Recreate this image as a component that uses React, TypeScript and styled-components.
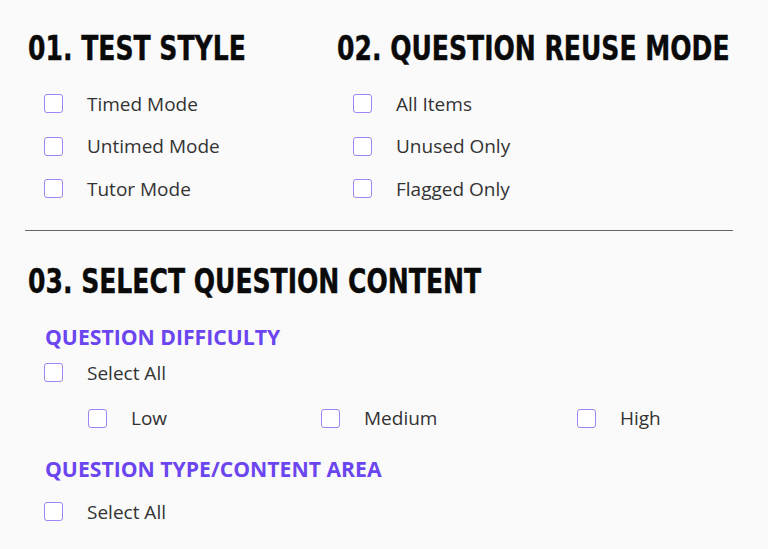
import React from "react";
import styled, { createGlobalStyle } from "styled-components";

const Global = createGlobalStyle`
  html, body { margin: 0; padding: 0; background: #fafafa; overflow-x: hidden; }
  body { font-family: "Open Sans", "Noto Sans", sans-serif; color: #333; }
`;

const Page = styled.div`
  padding: 26px 35px 20px 25px;
  display: flex;
  flex-direction: column;
  overflow: hidden;
`;

const TopGrid = styled.div`
  display: grid;
  grid-template-columns: 309px 1fr;
  padding-bottom: 19.5px;
`;

const Column = styled.div`
  display: flex;
  flex-direction: column;
  min-width: 0;
`;

const Heading = styled.h2`
  margin: 0 0 0 3px;
  font-family: "DejaVu Sans Condensed", "DejaVu Sans", sans-serif;
  font-weight: 700;
  font-size: 34px;
  line-height: 44px;
  color: #0a0a0a;
  white-space: nowrap;
  -webkit-text-stroke: 0.4px #0a0a0a;
  transform: scaleX(0.82);
  transform-origin: left center;
`;

const List = styled.div`
  display: flex;
  flex-direction: column;
  margin-top: 12.5px;
  padding-left: 19px;
`;

const Row = styled.label`
  display: flex;
  align-items: center;
  height: 42.5px;
  font-size: 19px;
  color: #333;
  cursor: pointer;
`;

const Box = styled.span`
  width: 19px;
  height: 19px;
  box-sizing: border-box;
  border: 1.6px solid #a084f3;
  border-radius: 3px;
  flex: none;
  margin-right: 24px;
  background: #fff;
`;

const Divider = styled.hr`
  margin: 0;
  border: none;
  border-top: 1.5px solid #666;
  width: 708px;
`;

const Section = styled.div`
  display: flex;
  flex-direction: column;
  padding-top: 28px;
`;

const SubHeading = styled.h3<{ $top: number }>`
  margin: ${(p) => p.$top}px 0 0 20px;
  font-family: "Open Sans", "Noto Sans", sans-serif;
  font-weight: 700;
  font-size: 21.2px;
  line-height: 24px;
  color: #6b45ef;
`;

const SubList = styled.div<{ $top: number }>`
  display: flex;
  flex-direction: column;
  padding-left: 19px;
  margin-top: ${(p) => p.$top}px;
`;

const TriGrid = styled.div`
  display: grid;
  grid-template-columns: 233px 256px 1fr;
  padding-left: 63px;
  margin-top: 3px;
`;

const Check = ({ label }: { label: string }) => (
  <Row>
    <Box />
    <span>{label}</span>
  </Row>
);

export default function App() {
  return (
    <>
      <Global />
      <Page>
        <TopGrid>
          <Column>
            <Heading>01. TEST STYLE</Heading>
            <List>
              <Check label="Timed Mode" />
              <Check label="Untimed Mode" />
              <Check label="Tutor Mode" />
            </List>
          </Column>
          <Column>
            <Heading>02. QUESTION REUSE MODE</Heading>
            <List>
              <Check label="All Items" />
              <Check label="Unused Only" />
              <Check label="Flagged Only" />
            </List>
          </Column>
        </TopGrid>
        <Divider />
        <Section>
          <Heading>03. SELECT QUESTION CONTENT</Heading>
          <SubHeading $top={22}>QUESTION DIFFICULTY</SubHeading>
          <SubList $top={3}>
            <Check label="Select All" />
          </SubList>
          <TriGrid>
            <Check label="Low" />
            <Check label="Medium" />
            <Check label="High" />
          </TriGrid>
          <SubHeading $top={17}>QUESTION TYPE/CONTENT AREA</SubHeading>
          <SubList $top={10}>
            <Check label="Select All" />
          </SubList>
        </Section>
      </Page>
    </>
  );
}
